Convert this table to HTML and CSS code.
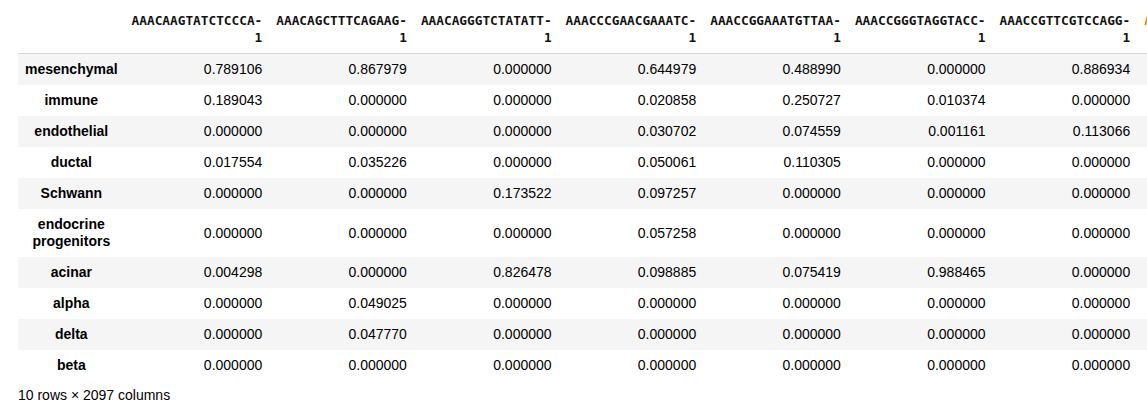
FILE: index.html
```html
<!DOCTYPE html>
<html>
<head>
<meta charset="utf-8">
<link rel="stylesheet" href="styles.css">
</head>
<body>
<div class="output">
  <table class="df">
    <thead>
      <tr>
        <th class="blank"></th>
        <th>AAACAAGTATCTCCCA-<br>1</th>
        <th>AAACAGCTTTCAGAAG-<br>1</th>
        <th>AAACAGGGTCTATATT-<br>1</th>
        <th>AAACCCGAACGAAATC-<br>1</th>
        <th>AAACCGGAAATGTTAA-<br>1</th>
        <th>AAACCGGGTAGGTACC-<br>1</th>
        <th>AAACCGTTCGTCCAGG-<br>1</th>
        <th class="next">AAACCTGAGTACGTTC-<br>1</th>
      </tr>
    </thead>
    <tbody>
      <tr><th>mesenchymal</th><td>0.789106</td><td>0.867979</td><td>0.000000</td><td>0.644979</td><td>0.488990</td><td>0.000000</td><td>0.886934</td><td></td></tr>
      <tr><th>immune</th><td>0.189043</td><td>0.000000</td><td>0.000000</td><td>0.020858</td><td>0.250727</td><td>0.010374</td><td>0.000000</td><td></td></tr>
      <tr><th>endothelial</th><td>0.000000</td><td>0.000000</td><td>0.000000</td><td>0.030702</td><td>0.074559</td><td>0.001161</td><td>0.113066</td><td></td></tr>
      <tr><th>ductal</th><td>0.017554</td><td>0.035226</td><td>0.000000</td><td>0.050061</td><td>0.110305</td><td>0.000000</td><td>0.000000</td><td></td></tr>
      <tr><th>Schwann</th><td>0.000000</td><td>0.000000</td><td>0.173522</td><td>0.097257</td><td>0.000000</td><td>0.000000</td><td>0.000000</td><td></td></tr>
      <tr><th>endocrine progenitors</th><td>0.000000</td><td>0.000000</td><td>0.000000</td><td>0.057258</td><td>0.000000</td><td>0.000000</td><td>0.000000</td><td></td></tr>
      <tr><th>acinar</th><td>0.004298</td><td>0.000000</td><td>0.826478</td><td>0.098885</td><td>0.075419</td><td>0.988465</td><td>0.000000</td><td></td></tr>
      <tr><th>alpha</th><td>0.000000</td><td>0.049025</td><td>0.000000</td><td>0.000000</td><td>0.000000</td><td>0.000000</td><td>0.000000</td><td></td></tr>
      <tr><th>delta</th><td>0.000000</td><td>0.047770</td><td>0.000000</td><td>0.000000</td><td>0.000000</td><td>0.000000</td><td>0.000000</td><td></td></tr>
      <tr><th>beta</th><td>0.000000</td><td>0.000000</td><td>0.000000</td><td>0.000000</td><td>0.000000</td><td>0.000000</td><td>0.000000</td><td></td></tr>
    </tbody>
  </table>
  <p class="shape">10 rows × 2097 columns</p>
</div>
</body>
</html>
```

FILE: styles.css
```css
html, body {
  margin: 0;
  padding: 0;
  overflow: hidden;
  background: #fff;
}

body {
  font-family: "Liberation Sans", Arial, sans-serif;
  font-size: 14px;
  color: #000;
}

.output {
  padding: 5px 0 0 18px;
}

.df {
  border-collapse: collapse;
  border-spacing: 0;
  width: 1px;
  table-layout: auto;
}

.df th,
.df td {
  padding: 7px;
  line-height: 17px;
  vertical-align: middle;
  border: none;
}

.df thead th {
  font-family: "DejaVu Sans Mono", "Liberation Mono", monospace;
  font-size: 12.78px;
  font-weight: bold;
  text-align: right;
  color: #111;
  border-bottom: 1px solid #d8d8d8;
}

.df thead th.next {
  color: #e8850c;
}

.df tbody th {
  font-weight: bold;
  text-align: center;
  color: #000;
}

.df tbody td {
  text-align: right;
  white-space: nowrap;
}

.df tbody tr:nth-child(odd) {
  background: #f5f5f5;
}

.shape {
  margin: 6px 0 0;
  line-height: 16px;
}
```
